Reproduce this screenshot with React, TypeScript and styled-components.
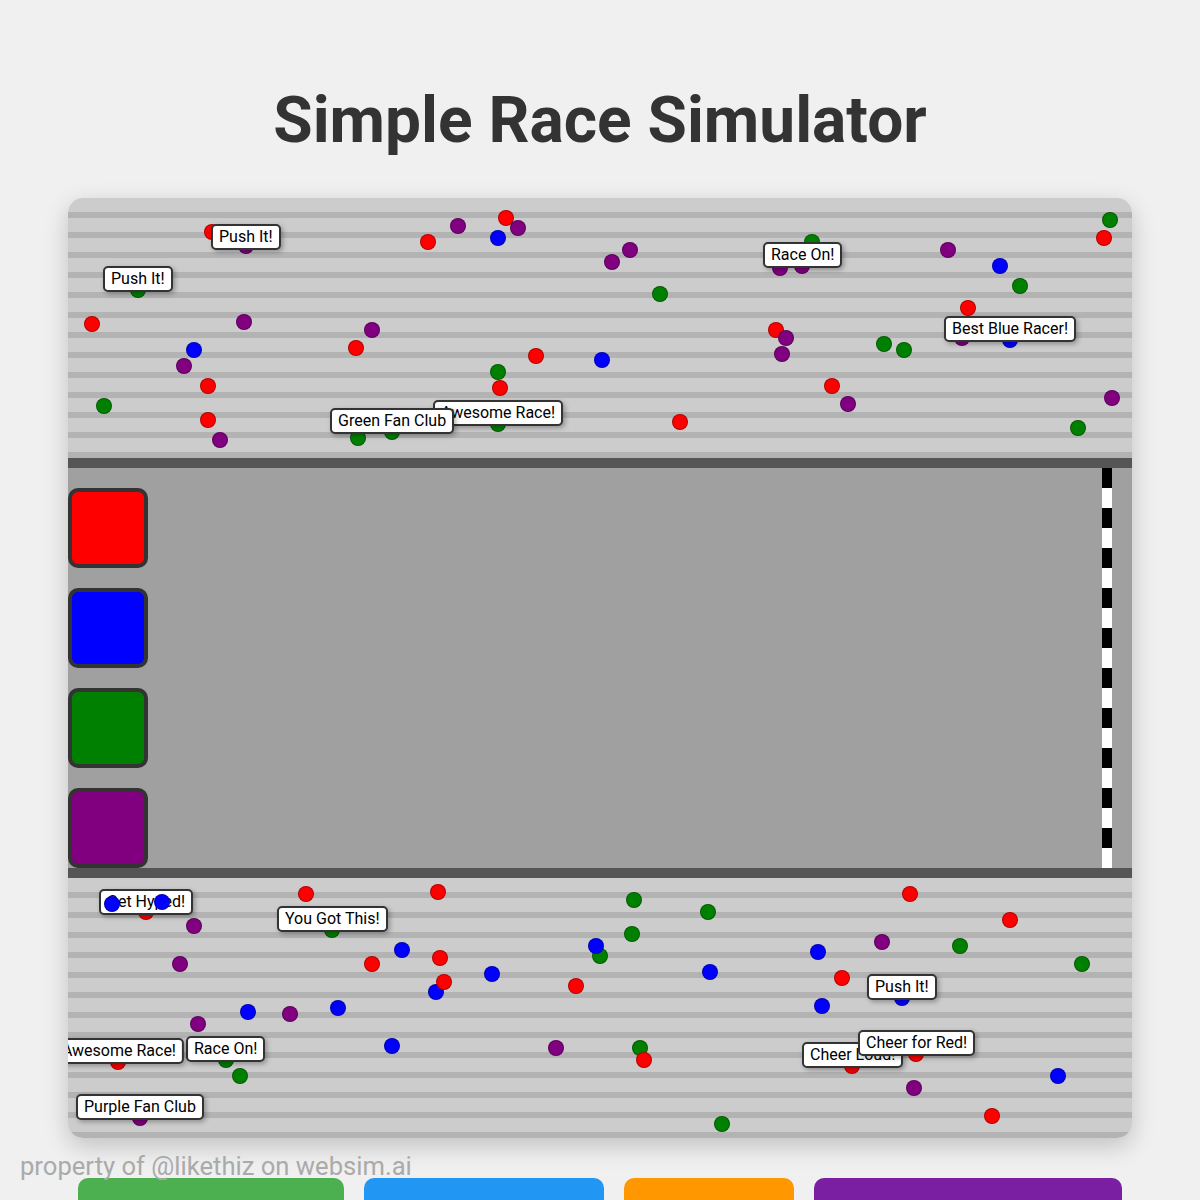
import React from "react";
import styled, { createGlobalStyle } from "styled-components";

type Team = "red" | "blue" | "green" | "purple";

const teamColor: Record<Team, string> = {
  red: "#ff0000",
  blue: "#0000ff",
  green: "#008000",
  purple: "#800080",
};

const GlobalStyle = createGlobalStyle`
  html, body {
    margin: 0;
    height: 1200px;
    overflow: hidden;
    background: #f0f0f0;
    font-family: Roboto, "Liberation Sans", sans-serif;
  }
`;

const Page = styled.div`
  position: relative;
  height: 1200px;
  overflow: hidden;
  display: flex;
  flex-direction: column;
  align-items: center;
`;

const Title = styled.h1`
  margin: 83px 0 39px;
  height: 76px;
  font-size: 64px;
  line-height: 76px;
  font-weight: 700;
  color: #333;
`;

const Scene = styled.div`
  width: 1064px;
  height: 940px;
  flex: none;
  border-radius: 15px;
  overflow: hidden;
  box-shadow: 0 8px 24px rgba(0, 0, 0, 0.2);
`;

const Stand = styled.div`
  position: relative;
  height: 260px;
  overflow: hidden;
  background: repeating-linear-gradient(
    180deg,
    #cccccc 0,
    #cccccc 14px,
    #b3b3b3 14px,
    #b3b3b3 20px
  );
`;

const Track = styled.div`
  position: relative;
  height: 400px;
  border-top: 10px solid #555;
  border-bottom: 10px solid #555;
  background: #a0a0a0;
`;

const Lane = styled.div`
  height: 100px;
  box-sizing: border-box;
  padding-top: 20px;
`;

const Racer = styled.div<{ $team: Team }>`
  width: 80px;
  height: 80px;
  box-sizing: border-box;
  border: 4px solid #333;
  border-radius: 10px;
  background: ${(p) => teamColor[p.$team]};
`;

const FinishLine = styled.div`
  position: absolute;
  top: 0;
  right: 20px;
  width: 10px;
  height: 100%;
  background: repeating-linear-gradient(
    180deg,
    #000 0,
    #000 20px,
    #fff 20px,
    #fff 40px
  );
`;

const Fan = styled.div.attrs<{ $x: number; $y: number }>((p) => ({
  style: { left: p.$x - 8, top: p.$y - 8 },
}))<{ $x: number; $y: number; $team: Team }>`
  position: absolute;
  width: 16px;
  height: 16px;
  box-sizing: border-box;
  border-radius: 50%;
  background: ${(p) => teamColor[p.$team]};
  border: 1px solid rgba(0, 0, 0, 0.3);
`;

const Bubble = styled.div.attrs<{ $x: number; $y: number }>((p) => ({
  style: { left: p.$x - 1, top: p.$y },
}))<{ $x: number; $y: number }>`
  position: absolute;
  box-sizing: border-box;
  height: 26px;
  padding: 0 6px;
  line-height: 22px;
  font-size: 16px;
  white-space: nowrap;
  color: #000;
  background: #fff;
  border: 2px solid #333;
  border-radius: 5px;
  box-shadow: 2px 2px 5px rgba(0, 0, 0, 0.3);
`;

const Watermark = styled.div`
  position: absolute;
  left: 20px;
  top: 1151px;
  font-size: 25.6px;
  line-height: 30px;
  color: #aaa;
  white-space: nowrap;
`;

const Controls = styled.div`
  display: flex;
  gap: 20px;
  margin-top: 40px;
  flex: none;
`;

const ControlButton = styled.button<{ $w: number; $bg: string }>`
  width: ${(p) => p.$w}px;
  height: 60px;
  padding: 0;
  border: none;
  border-radius: 10px;
  background: ${(p) => p.$bg};
`;

type Item =
  | { kind: "fan"; team: Team; x: number; y: number }
  | { kind: "bubble"; text: string; x: number; y: number };

const fans = (team: Team, pts: [number, number][]): Item[] =>
  pts.map(([x, y]) => ({ kind: "fan", team, x, y }));
const bubble = (text: string, x: number, y: number): Item => ({ kind: "bubble", text, x, y });

const topTop = 198;
const bottomTop = 878;
const left = 68;

const topItems: Item[] = [
  ...fans("red", [[212, 232], [428, 242], [506, 218], [1104, 238], [92, 324], [356, 348], [536, 356], [776, 330], [968, 308], [208, 386], [500, 388], [208, 420], [832, 386], [680, 422]]),
  ...fans("purple", [[246, 246], [458, 226], [518, 228], [612, 262], [630, 250], [780, 268], [802, 266], [948, 250], [244, 322], [372, 330], [786, 338], [782, 354], [962, 338], [184, 366], [848, 404], [1112, 398], [220, 440]]),
  ...fans("blue", [[498, 238], [1000, 266], [194, 350], [602, 360], [1010, 340]]),
  ...fans("green", [[138, 290], [812, 242], [1110, 220], [660, 294], [1020, 286], [884, 344], [904, 350], [498, 372], [104, 406], [358, 438], [392, 432], [498, 424], [1078, 428]]),
  bubble("Push It!", 212, 224),
  bubble("Push It!", 104, 266),
  bubble("Race On!", 764, 242),
  bubble("Best Blue Racer!", 945, 316),
  bubble("Awesome Race!", 434, 400),
  bubble("Green Fan Club", 331, 408),
];

const bottomItems: Item[] = [
  ...fans("red", [[146, 912], [306, 894], [438, 892], [910, 894], [1010, 920], [372, 964], [440, 958], [576, 986], [842, 978], [118, 1062], [852, 1066], [916, 1054], [992, 1116]]),
  ...fans("purple", [[194, 926], [180, 964], [882, 942], [198, 1024], [290, 1014], [556, 1048], [914, 1088], [140, 1118]]),
  ...fans("green", [[634, 900], [708, 912], [332, 930], [632, 934], [600, 956], [960, 946], [1082, 964], [640, 1048], [226, 1060], [240, 1076], [722, 1124]]),
  ...fans("red", [[644, 1060]]),
  ...fans("blue", [[402, 950], [596, 946], [818, 952], [492, 974], [710, 972], [436, 992]]),
  ...fans("red", [[444, 982]]),
  ...fans("blue", [[248, 1012], [338, 1008], [822, 1006], [902, 998], [392, 1046], [1058, 1076]]),
  bubble("Get Hyped!", 100, 889),
  ...fans("blue", [[112, 904], [162, 902]]),
  bubble("You Got This!", 278, 906),
  bubble("Push It!", 868, 974),
  bubble("Cheer Loud!", 803, 1042),
  bubble("Cheer for Red!", 859, 1030),
  bubble("Race On!", 187, 1036),
  bubble("Purple Fan Club", 77, 1094),
];

const awesomeRight = 185 - left;

const AwesomeClipped = styled(Bubble)`
  transform: translateX(-100%);
`;

const Crowd = ({ items, top }: { items: Item[]; top: number }) => (
  <>
    {items.map((it, i) =>
      it.kind === "fan" ? (
        <Fan key={i} $team={it.team} $x={it.x - left} $y={it.y - top} />
      ) : (
        <Bubble key={i} $x={it.x - left} $y={it.y - top}>
          {it.text}
        </Bubble>
      )
    )}
  </>
);

const teams: Team[] = ["red", "blue", "green", "purple"];

export default function App() {
  return (
    <Page>
      <GlobalStyle />
      <Title>Simple Race Simulator</Title>
      <Scene>
        <Stand>
          <Crowd items={topItems} top={topTop} />
        </Stand>
        <Track>
          {teams.map((t) => (
            <Lane key={t}>
              <Racer $team={t} />
            </Lane>
          ))}
          <FinishLine />
        </Track>
        <Stand>
          <Crowd items={bottomItems} top={bottomTop} />
          <AwesomeClipped $x={awesomeRight} $y={1038 - bottomTop}>
            Awesome Race!
          </AwesomeClipped>
        </Stand>
      </Scene>
      <Controls>
        <ControlButton $w={266} $bg="#4CAF50" />
        <ControlButton $w={240} $bg="#2196F3" />
        <ControlButton $w={170} $bg="#FF9800" />
        <ControlButton $w={308} $bg="#7B1FA2" />
      </Controls>
      <Watermark>property of @likethiz on websim.ai</Watermark>
    </Page>
  );
}
